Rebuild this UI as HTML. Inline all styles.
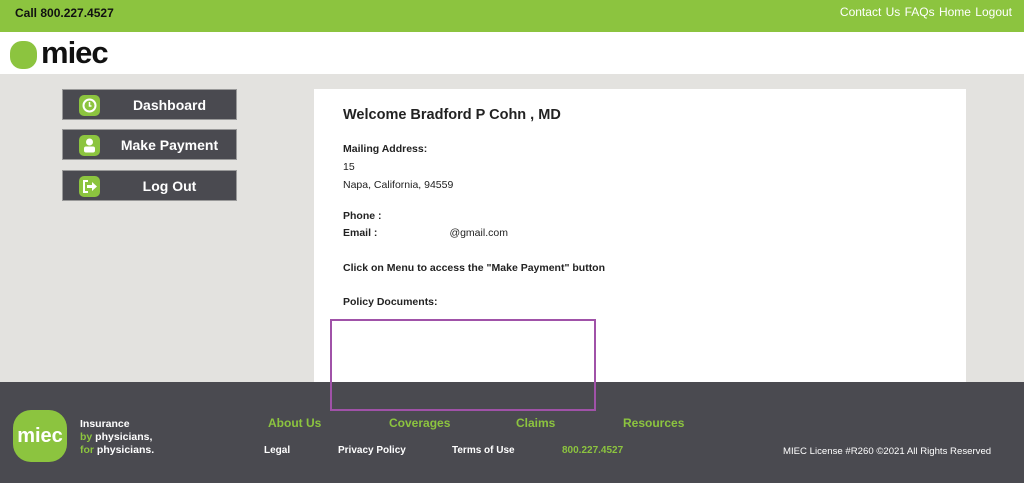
<!DOCTYPE html>
<html><head><style>
*{margin:0;padding:0;box-sizing:border-box}
body{width:1024px;height:483px;overflow:hidden;font-family:"Liberation Sans",sans-serif;background:#e3e2df;position:relative}
.top{position:absolute;left:0;top:0;width:1024px;height:32px;background:#8cc43f;}
.top .call{position:absolute;left:15px;top:6px;font-weight:bold;font-size:12px;color:#111}
.top .links{position:absolute;right:12px;top:5px;font-size:12px;color:#fff;word-spacing:1px}
.hdr{position:absolute;left:0;top:32px;width:1024px;height:42px;background:#fff}
.logo{position:absolute;left:10px;top:41px;width:27px;height:28px;border-radius:12px;background:#8cc43f}
.logotxt{position:absolute;left:41px;top:35px;font-weight:bold;font-size:31px;color:#111;letter-spacing:-1px}
.btn{position:absolute;left:62px;width:175px;height:31px;background:#4a4a50;border:1px solid #999;color:#fff;font-weight:bold;font-size:14px}
.btn .ic{position:absolute;left:16px;top:5px;width:21px;height:21px;border-radius:5px;background:#8cc43f}
.btn span{position:absolute;top:7px;left:40px;right:0;text-align:center}
.main{position:absolute;left:314px;top:89px;width:652px;height:300px;background:#fff;font-size:10.5px;color:#222}
.main b{font-weight:bold}
.foot{position:absolute;left:0;top:382px;width:1024px;height:101px;background:#4a4a50}
.g{color:#8cc43f;font-weight:bold;font-size:12px;position:absolute}
.w{color:#fff;font-weight:bold;font-size:10px;position:absolute}
</style></head><body>
<div class="top"><div class="call">Call 800.227.4527</div><div class="links">Contact Us FAQs Home Logout</div></div>
<div class="hdr"></div><div class="logo"></div><div class="logotxt">miec</div>
<div class="btn" style="top:89px"><div class="ic"><svg width="21" height="21"><circle cx="10.5" cy="10.5" r="6" fill="none" stroke="#fff" stroke-width="2"/><path d="M10.5 7v4h2" stroke="#fff" fill="none" stroke-width="1.5"/></svg></div><span>Dashboard</span></div>
<div class="btn" style="top:129px"><div class="ic"><svg width="21" height="21"><circle cx="10.5" cy="7" r="3.5" fill="#fff"/><rect x="5" y="11.5" width="11" height="6" rx="2" fill="#fff"/></svg></div><span>Make Payment</span></div>
<div class="btn" style="top:170px"><div class="ic"><svg width="21" height="21"><path d="M9 5H5v11h4" stroke="#fff" stroke-width="2" fill="none"/><path d="M8 9h5V6l5 4.5-5 4.5v-3H8z" fill="#fff"/></svg></div><span>Log Out</span></div>
<div class="main">
<div style="position:absolute;left:29px;top:18px;font-size:14.5px;font-weight:bold;color:#222">Welcome Bradford P Cohn , MD</div>
<div style="position:absolute;left:29px;top:51px;line-height:18px"><b>Mailing Address:</b><br>15<br>Napa, California, 94559</div>
<div style="position:absolute;left:29px;top:119px;line-height:17px"><b>Phone :</b><br><b>Email :</b><span style="margin-left:72px">@gmail.com</span></div>
<div style="position:absolute;left:29px;top:173px"><b>Click on Menu to access the "Make Payment" button</b></div>
<div style="position:absolute;left:29px;top:207px"><b>Policy Documents:</b></div>
</div>
<div class="foot">
<div style="position:absolute;left:13px;top:28px;width:54px;height:52px;border-radius:18px;background:#8cc43f;color:#fff;font-weight:bold;font-size:20px;text-align:center;line-height:52px">miec</div>
<div style="position:absolute;left:80px;top:36px;color:#fff;font-weight:bold;font-size:10.5px;line-height:13px">Insurance<br><span style="color:#8cc43f">by</span> physicians,<br><span style="color:#8cc43f">for</span> physicians.</div>
<div class="g" style="left:268px;top:34px">About Us</div>
<div class="g" style="left:389px;top:34px">Coverages</div>
<div class="g" style="left:516px;top:34px">Claims</div>
<div class="g" style="left:623px;top:34px">Resources</div>
<div class="w" style="left:264px;top:63px">Legal</div>
<div class="w" style="left:338px;top:63px">Privacy Policy</div>
<div class="w" style="left:452px;top:63px">Terms of Use</div>
<div class="w" style="left:562px;top:63px;color:#8cc43f">800.227.4527</div>
<div style="position:absolute;left:783px;top:64px;color:#fff;font-size:9.6px">MIEC License #R260 ©2021 All Rights Reserved</div>
</div>
<div style="position:absolute;left:330px;top:319px;width:266px;height:92px;border:2px solid #a052a8"></div>
</body></html>
